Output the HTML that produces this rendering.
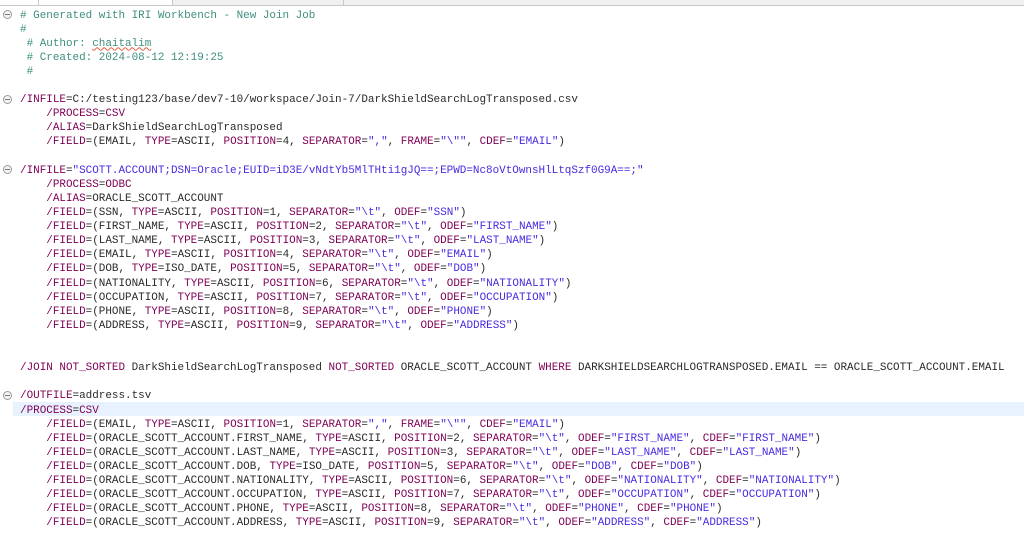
<!DOCTYPE html>
<html><head><meta charset="utf-8"><style>
html,body{margin:0;padding:0;width:1024px;height:552px;overflow:hidden;background:#fff}
.tabs{position:absolute;left:0;top:0;width:1024px;height:5px;background:#f0f0f0;border-bottom:1px solid #c8c8c8}
.tab{position:absolute;top:0;height:5px;background:#fff;border-left:1px solid #c8c8c8;border-right:1px solid #c8c8c8}
.hl{position:absolute;left:13px;top:402px;width:1011px;height:14px;background:#e8f2fe}
.code{position:absolute;left:20px;top:8.5px;font-family:"Liberation Mono",monospace;font-size:10.95px;line-height:14.11px;color:#2a2a2a;white-space:pre}
.k{color:#7f0055}.s{color:#4a2ae0}.c{color:#3f8f7f}
.fold{position:absolute;left:3px;width:7px;height:7px;border:1px solid #9a9a9a;border-radius:50%;background:#f4f4f4}
.fold:after{content:"";position:absolute;left:1px;top:3px;width:5px;height:1px;background:#777}
.u{text-decoration:underline wavy #e06040;text-decoration-thickness:1px}
</style></head><body>
<div class="tabs"><div class="tab" style="left:-1px;width:38px"></div><div class="tab" style="left:38px;width:134px"></div><div class="tab" style="left:172px;width:170px;background:#f0f0f0"></div></div>
<div class="hl"></div>
<div class="fold" style="top:10px"></div>
<div class="fold" style="top:95px"></div>
<div class="fold" style="top:165px"></div>
<div class="fold" style="top:391px"></div>
<div class="code"><span class="c"># Generated with IRI Workbench - New Join Job</span>
<span class="c">#</span>
<span class="c"> # Author: <span class="u">chaitalim</span></span>
<span class="c"> # Created: 2024-08-12 12:19:25</span>
<span class="c"> #</span>

<span class="k">/INFILE</span>=C:/testing123/base/dev7-10/workspace/Join-7/DarkShieldSearchLogTransposed.csv
    <span class="k">/PROCESS</span>=<span class="k">CSV</span>
    <span class="k">/ALIAS</span>=DarkShieldSearchLogTransposed
    <span class="k">/FIELD</span>=(EMAIL, <span class="k">TYPE</span>=ASCII, <span class="k">POSITION</span>=4, <span class="k">SEPARATOR</span>=<span class="s">","</span>, <span class="k">FRAME</span>=<span class="s">"\""</span>, <span class="k">CDEF</span>=<span class="s">"EMAIL"</span>)

<span class="k">/INFILE</span>=<span class="s">"SCOTT.ACCOUNT;DSN=Oracle;EUID=iD3E/vNdtYb5MlTHti1gJQ==;EPWD=Nc8oVtOwnsHlLtqSzf0G9A==;"</span>
    <span class="k">/PROCESS</span>=<span class="k">ODBC</span>
    <span class="k">/ALIAS</span>=ORACLE_SCOTT_ACCOUNT
    <span class="k">/FIELD</span>=(SSN, <span class="k">TYPE</span>=ASCII, <span class="k">POSITION</span>=1, <span class="k">SEPARATOR</span>=<span class="s">"\t"</span>, <span class="k">ODEF</span>=<span class="s">"SSN"</span>)
    <span class="k">/FIELD</span>=(FIRST_NAME, <span class="k">TYPE</span>=ASCII, <span class="k">POSITION</span>=2, <span class="k">SEPARATOR</span>=<span class="s">"\t"</span>, <span class="k">ODEF</span>=<span class="s">"FIRST_NAME"</span>)
    <span class="k">/FIELD</span>=(LAST_NAME, <span class="k">TYPE</span>=ASCII, <span class="k">POSITION</span>=3, <span class="k">SEPARATOR</span>=<span class="s">"\t"</span>, <span class="k">ODEF</span>=<span class="s">"LAST_NAME"</span>)
    <span class="k">/FIELD</span>=(EMAIL, <span class="k">TYPE</span>=ASCII, <span class="k">POSITION</span>=4, <span class="k">SEPARATOR</span>=<span class="s">"\t"</span>, <span class="k">ODEF</span>=<span class="s">"EMAIL"</span>)
    <span class="k">/FIELD</span>=(DOB, <span class="k">TYPE</span>=ISO_DATE, <span class="k">POSITION</span>=5, <span class="k">SEPARATOR</span>=<span class="s">"\t"</span>, <span class="k">ODEF</span>=<span class="s">"DOB"</span>)
    <span class="k">/FIELD</span>=(NATIONALITY, <span class="k">TYPE</span>=ASCII, <span class="k">POSITION</span>=6, <span class="k">SEPARATOR</span>=<span class="s">"\t"</span>, <span class="k">ODEF</span>=<span class="s">"NATIONALITY"</span>)
    <span class="k">/FIELD</span>=(OCCUPATION, <span class="k">TYPE</span>=ASCII, <span class="k">POSITION</span>=7, <span class="k">SEPARATOR</span>=<span class="s">"\t"</span>, <span class="k">ODEF</span>=<span class="s">"OCCUPATION"</span>)
    <span class="k">/FIELD</span>=(PHONE, <span class="k">TYPE</span>=ASCII, <span class="k">POSITION</span>=8, <span class="k">SEPARATOR</span>=<span class="s">"\t"</span>, <span class="k">ODEF</span>=<span class="s">"PHONE"</span>)
    <span class="k">/FIELD</span>=(ADDRESS, <span class="k">TYPE</span>=ASCII, <span class="k">POSITION</span>=9, <span class="k">SEPARATOR</span>=<span class="s">"\t"</span>, <span class="k">ODEF</span>=<span class="s">"ADDRESS"</span>)


<span class="k">/JOIN NOT_SORTED</span> DarkShieldSearchLogTransposed <span class="k">NOT_SORTED</span> ORACLE_SCOTT_ACCOUNT <span class="k">WHERE</span> DARKSHIELDSEARCHLOGTRANSPOSED.EMAIL == ORACLE_SCOTT_ACCOUNT.EMAIL

<span class="k">/OUTFILE</span>=address.tsv
<span class="k">/PROCESS</span>=<span class="k">CSV</span>
    <span class="k">/FIELD</span>=(EMAIL, <span class="k">TYPE</span>=ASCII, <span class="k">POSITION</span>=1, <span class="k">SEPARATOR</span>=<span class="s">","</span>, <span class="k">FRAME</span>=<span class="s">"\""</span>, <span class="k">CDEF</span>=<span class="s">"EMAIL"</span>)
    <span class="k">/FIELD</span>=(ORACLE_SCOTT_ACCOUNT.FIRST_NAME, <span class="k">TYPE</span>=ASCII, <span class="k">POSITION</span>=2, <span class="k">SEPARATOR</span>=<span class="s">"\t"</span>, <span class="k">ODEF</span>=<span class="s">"FIRST_NAME"</span>, <span class="k">CDEF</span>=<span class="s">"FIRST_NAME"</span>)
    <span class="k">/FIELD</span>=(ORACLE_SCOTT_ACCOUNT.LAST_NAME, <span class="k">TYPE</span>=ASCII, <span class="k">POSITION</span>=3, <span class="k">SEPARATOR</span>=<span class="s">"\t"</span>, <span class="k">ODEF</span>=<span class="s">"LAST_NAME"</span>, <span class="k">CDEF</span>=<span class="s">"LAST_NAME"</span>)
    <span class="k">/FIELD</span>=(ORACLE_SCOTT_ACCOUNT.DOB, <span class="k">TYPE</span>=ISO_DATE, <span class="k">POSITION</span>=5, <span class="k">SEPARATOR</span>=<span class="s">"\t"</span>, <span class="k">ODEF</span>=<span class="s">"DOB"</span>, <span class="k">CDEF</span>=<span class="s">"DOB"</span>)
    <span class="k">/FIELD</span>=(ORACLE_SCOTT_ACCOUNT.NATIONALITY, <span class="k">TYPE</span>=ASCII, <span class="k">POSITION</span>=6, <span class="k">SEPARATOR</span>=<span class="s">"\t"</span>, <span class="k">ODEF</span>=<span class="s">"NATIONALITY"</span>, <span class="k">CDEF</span>=<span class="s">"NATIONALITY"</span>)
    <span class="k">/FIELD</span>=(ORACLE_SCOTT_ACCOUNT.OCCUPATION, <span class="k">TYPE</span>=ASCII, <span class="k">POSITION</span>=7, <span class="k">SEPARATOR</span>=<span class="s">"\t"</span>, <span class="k">ODEF</span>=<span class="s">"OCCUPATION"</span>, <span class="k">CDEF</span>=<span class="s">"OCCUPATION"</span>)
    <span class="k">/FIELD</span>=(ORACLE_SCOTT_ACCOUNT.PHONE, <span class="k">TYPE</span>=ASCII, <span class="k">POSITION</span>=8, <span class="k">SEPARATOR</span>=<span class="s">"\t"</span>, <span class="k">ODEF</span>=<span class="s">"PHONE"</span>, <span class="k">CDEF</span>=<span class="s">"PHONE"</span>)
    <span class="k">/FIELD</span>=(ORACLE_SCOTT_ACCOUNT.ADDRESS, <span class="k">TYPE</span>=ASCII, <span class="k">POSITION</span>=9, <span class="k">SEPARATOR</span>=<span class="s">"\t"</span>, <span class="k">ODEF</span>=<span class="s">"ADDRESS"</span>, <span class="k">CDEF</span>=<span class="s">"ADDRESS"</span>)</div>
</body></html>
